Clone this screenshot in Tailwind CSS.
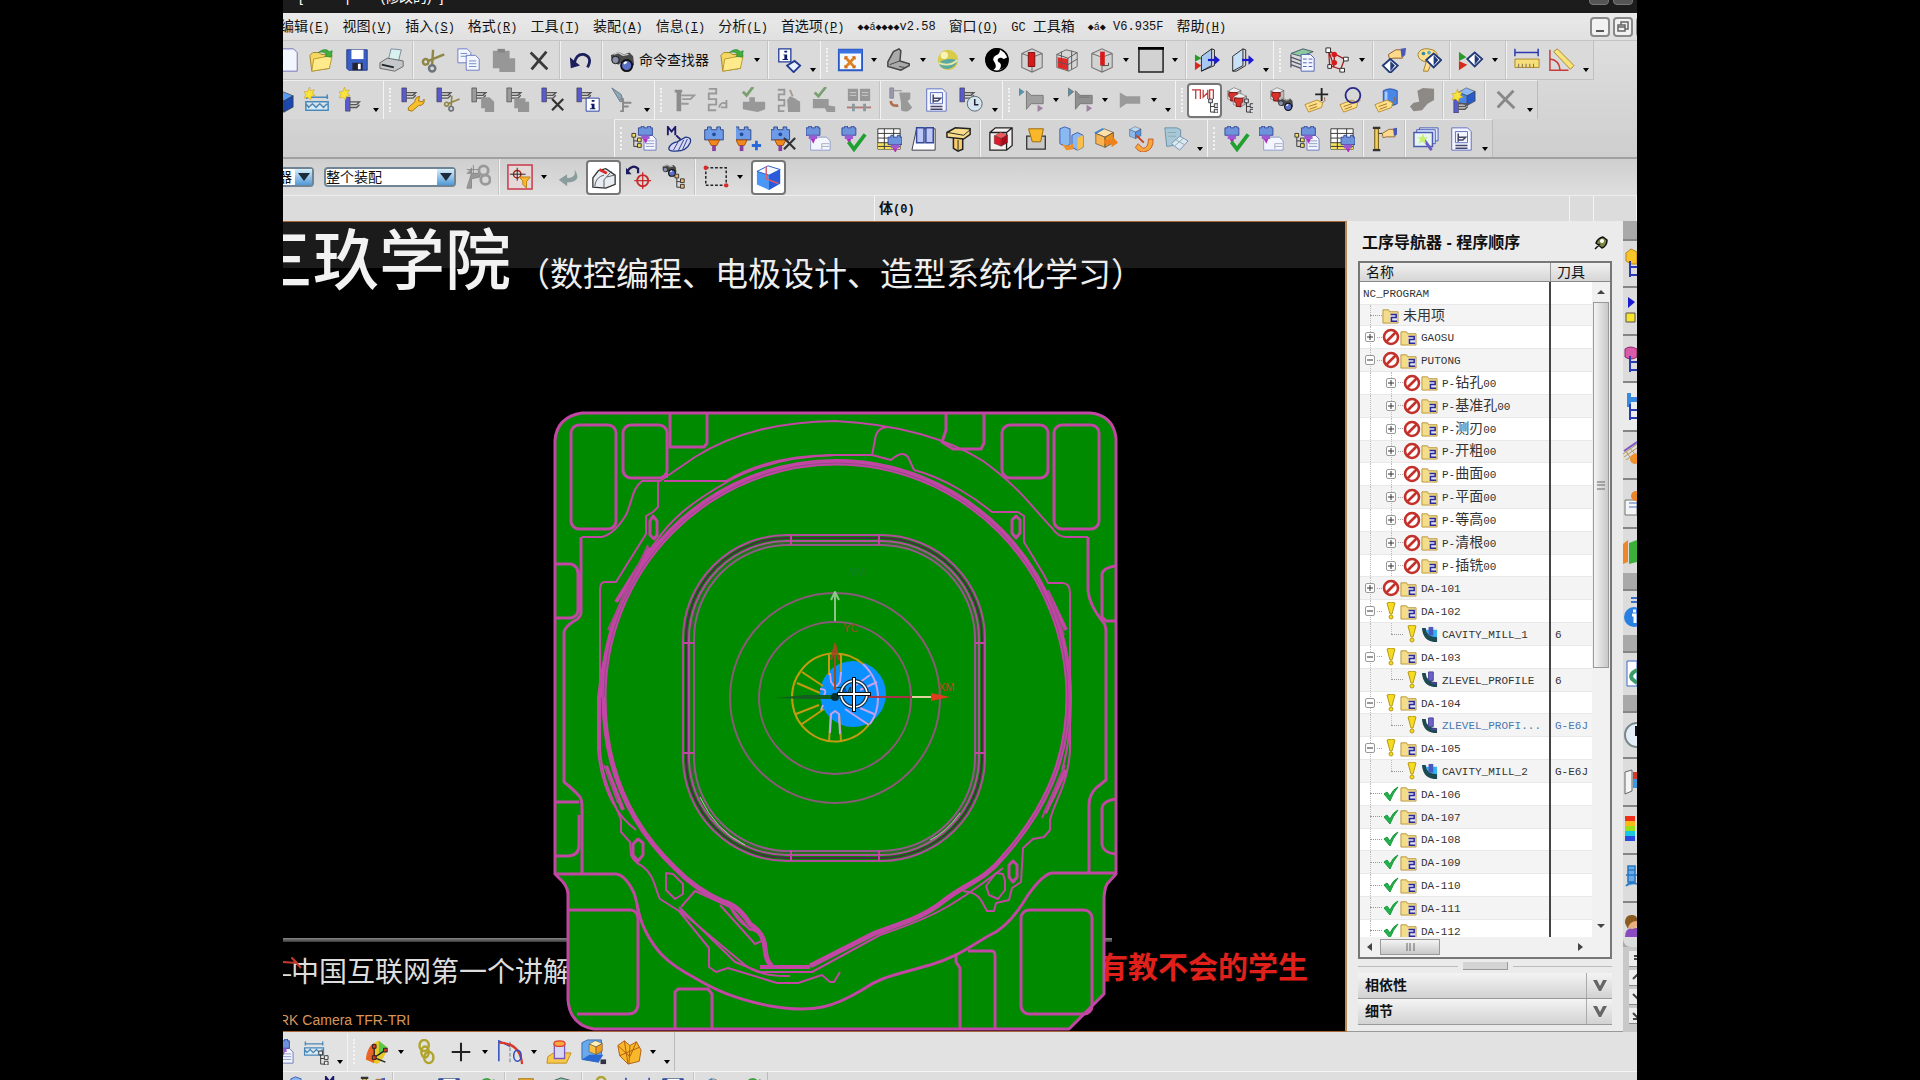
<!DOCTYPE html>
<html lang="zh-CN">

<head>
    <meta charset="UTF-8">
    <meta name="viewport" content="width=device-width, initial-scale=1.0">
    <title>NX 加工</title>
    <script src="https://cdn.jsdelivr.net/npm/@tailwindcss/browser@4"></script>
</head>

<body class="bg-black font-['Liberation_Sans','Noto_Sans_CJK_SC',sans-serif]">
    <div class="flex flex-col h-screen overflow-hidden mx-[283px] bg-[#dcdcdc] text-[#111]">
        <!-- title bar -->
        <header class="flex justify-between h-[13px] shrink-0 overflow-hidden bg-[#1c1c1c] text-white">
            <h1 class="-mt-[13px] ml-4 text-sm leading-5 whitespace-pre">[           |        (修改的)  ]</h1>
            <div class="flex gap-1 -mt-[15px] mr-1">
                <button aria-label="最小化" class="w-5 h-5 rounded-sm border border-[#777] bg-[#555] flex items-end justify-center"><span class="w-2 h-[3px] mb-1 bg-white"></span></button>
                <button aria-label="最大化" class="w-5 h-5 rounded-sm border border-[#777] bg-[#555] flex items-end justify-center"><span class="w-3 h-[3px] mb-1 bg-white"></span></button>
            </div>
        </header>

        <!-- menu bar -->
        <nav class="flex items-center h-7 shrink-0 bg-linear-to-b from-[#eaeaea] to-[#e0e0e0] border-b border-[#c4c4c4]">
            <div id="menu" class="flex flex-1 gap-[13px] -ml-[3px] text-[14px] leading-5 whitespace-nowrap"></div>
            <div class="flex gap-[3px] w-[47px] overflow-hidden shrink-0">
                <button aria-label="最小化文档" class="w-5 h-5 shrink-0 rounded-sm border-2 border-[#8a8a8a] bg-[#f2f2f2] flex items-end justify-center"><span class="w-2 h-[2px] mb-[3px] bg-[#555]"></span></button>
                <button aria-label="还原文档" class="w-5 h-5 shrink-0 rounded-sm border-2 border-[#8a8a8a] bg-[#f2f2f2]"><svg viewBox="0 0 16 16" class="w-4 h-4"><path d="M6 6V3h7v7h-3M3 6h7v6H3zM3 8h7" fill="none" stroke="#666" stroke-width="1.5"/></svg></button>
                <button aria-label="关闭文档" class="w-5 h-5 shrink-0 rounded-sm border-2 border-[#8a8a8a] bg-[#f2f2f2]"></button>
            </div>
        </nav>

        <!-- tool bars -->
        <div class="shrink-0 bg-linear-to-b from-[#dedede] to-[#cecece] border-b-2 border-[#a0a0a0]">
            <div class="flex h-[39px] overflow-hidden"><div id="bar1" class="flex items-center -ml-[14px] shrink-0 bg-[#dadada] border-b border-r border-[#c0c0c0]"></div></div>
            <div class="flex h-[39px] overflow-hidden"><div id="bar2" class="flex items-center -ml-[19px] shrink-0 bg-[#d8d8d8] border-t border-t-[#eee] border-r border-r-[#bbb]"></div></div>
            <div class="flex h-[38px] overflow-hidden"><div id="bar3" class="flex items-center ml-[331px] shrink-0 bg-[#d4d4d4] border-t border-t-[#eee] border-r border-r-[#bbb]"></div></div>
        </div>

        <!-- selection bar -->
        <div class="flex items-center h-9 shrink-0 bg-linear-to-b from-[#cfcfcf] to-[#dedede] overflow-hidden text-[14px]">
            <label class="relative shrink-0 w-[31px] h-5 mr-[10px]">
                <select aria-label="类型过滤器" class="appearance-none absolute right-0 w-[120px] h-5 pr-5 text-right leading-4 bg-white rounded-sm border-2 border-[#6f8596]"><option>无选择过滤器</option></select>
                <span class="absolute right-[2px] top-[2px] w-[17px] h-4 bg-linear-to-b from-[#d8eefb] to-[#4f9ad6] flex items-center justify-center pointer-events-none"><svg viewBox="0 0 12 8" class="w-3 h-2"><path d="M0 0h12L6 8z" fill="#1b2b3a"/></svg></span>
            </label>
            <label class="relative shrink-0 w-[132px] h-5">
                <select aria-label="选择范围" class="appearance-none w-full h-5 leading-4 bg-white rounded-sm border-2 border-[#6f8596]"><option>整个装配</option></select>
                <span class="absolute right-[2px] top-[2px] w-[17px] h-4 bg-linear-to-b from-[#d8eefb] to-[#4f9ad6] flex items-center justify-center pointer-events-none"><svg viewBox="0 0 12 8" class="w-3 h-2"><path d="M0 0h12L6 8z" fill="#1b2b3a"/></svg></span>
            </label>
            <div id="selbar" class="flex items-center h-full ml-1"></div>
        </div>

        <!-- status line -->
        <div class="flex shrink-0 h-[26px] items-stretch bg-[#dcdcdc] border-t border-[#eee] text-[14px] leading-6 font-bold">
            <div class="w-[592px] shrink-0 border-r border-[#f4f4f4]"></div>
            <output class="flex-1 pl-1">体<span class="font-['Liberation_Mono',monospace] text-[12px]">(0)</span></output>
            <div class="w-6 border-l border-[#f4f4f4]"></div>
            <div class="w-11 border-x border-[#f4f4f4]"></div>
        </div>

        <div class="flex flex-1 min-h-0">
            <!-- graphics window -->
            <main class="relative flex-1 min-w-0 overflow-hidden bg-black border-y border-[#a8673a] border-r-2 border-r-[#b98a52]">
                <div class="absolute inset-x-0 top-0 h-[46px] bg-[#1b1b1b]"></div>
                <p class="absolute -left-[36px] -top-[6px] text-[66px] leading-[90px] font-medium text-[#f2f2f2] whitespace-nowrap">三玖学院</p>
                <p class="absolute left-[234px] top-[28px] text-[33px] leading-[50px] text-[#eee] whitespace-nowrap">（数控编程、电极设计、造型系统化学习）</p>
                <div class="absolute left-0 top-[716px] w-[829px] h-1 bg-linear-to-b from-[#888] to-[#3a3a3a]"></div>
                <p class="absolute -left-[20px] top-[731px] text-[28px] leading-10 text-[#ddd] whitespace-nowrap">—中国互联网第一个讲解</p>
                <p class="absolute left-[815px] top-[726px] text-[30px] leading-10 font-bold text-[#e0201a] whitespace-nowrap">有教不会的学生</p>
                <p class="absolute -left-[4px] top-[788px] text-[14px] leading-5 text-[#d8965a] whitespace-nowrap">RK Camera TFR-TRI</p>
                <svg viewBox="283 222 1063 809" preserveAspectRatio="xMinYMin slice" class="absolute inset-0 w-full h-full" fill="none" stroke="#c246a4" stroke-width="2" stroke-linejoin="round">
                    <path d="M283 962l14 1-5-5 9 10" stroke="#c43a2e" stroke-width="2"/>
                    <!-- stock outline -->
                    <path fill="#008a00" stroke-width="3" d="M555 440Q557 417 582 413H1090Q1113 415 1116 438V874L1107 884Q1104 890 1104 900V994L1069 1029H594Q570 1025 568 1000V895Q568 888 563 882L555 874Z"/>
                    <!-- pockets -->
                    <g stroke-width="3">
                        <rect x="571" y="425" width="45" height="104" rx="8"/>
                        <rect x="623" y="425" width="44" height="53" rx="8"/>
                        <path d="M670 413V447H704L707 443V413"/>
                        <rect x="1002" y="425" width="46" height="53" rx="8"/>
                        <rect x="1054" y="425" width="45" height="104" rx="8"/>
                        <path d="M946 413V430L942 442L953 449H981L984 443V413"/>
                        <path d="M556 564H571Q578 566 578 574V610Q578 616 571 618H556M581 537V612Q581 618 574 621Q565 627 564 632V782Q574 790 580 797Q582 800 582 808V873"/>
                        <path d="M556 802H579M579 815V845Q579 856 567 856H556"/>
                        <path d="M1088 537V590Q1089 605 1103 622Q1106 625 1106 632V780L1096 788Q1089 795 1089 805V873"/>
                        <path d="M1115 566Q1103 568 1102 574V617L1106 621H1115M1115 799Q1103 801 1102 808V845Q1104 853 1115 854"/>
                        <path d="M555 874H615Q625 874 634 893Q637 902 639 915M568 910H631Q638 911 638 920V1005Q637 1014 628 1014H577"/>
                        <rect x="1021" y="910" width="71" height="104" rx="8"/>
                        <path d="M1115 873H1052Q1043 874 1028 895C1018 912 1006 928 990 935C972 945 960 956 930 965C895 975 880 977 862 990C835 1006 815 1014 770 1006C735 999 715 990 695 978C665 962 655 950 645 930Q640 920 637 905"/>
                        <path d="M675 1029V992L678 989H708L712 994V1029M956 956V962L960 968V1029M968 951H992Q995 951 995 956V1029"/>
                    </g>
                    <!-- outer arc and side contours -->
                    <path d="M582 537H602Q616 533 627 513C633 497 633 488 642 481H660L695 457C735 432 780 422 835 421C900 424 950 440 983 461C1020 488 1030 505 1052 528Q1058 537 1066 537H1088"/>
                    <path d="M667 478V449M658 480V507L653 512L646 516V534L616 582H604Q600 583 600 590V750C603 785 614 800 621 820V832L630 842L631 855Q634 862 642 866C655 875 655 890 660 899L679 911L709 948V967L716 972L728 968L777 983H798L822 975L830 982H834L840 972"/>
                    <path d="M664 481H726Q770 455 835 455H872L875 440Q876 427 889 427M872 455L891 460Q902 450 908 457L914 470C945 478 975 498 992 512H1018L1024 516V542L1044 575L1048 583H1062Q1070 583 1070 593V750C1068 785 1055 800 1050 820V830L1044 837L1033 839L1023 848L1021 882L1012 888L1009 900L996 903L994 911L987 911L981 900Q976 892 963 891"/>
                    <path d="M835 455Q770 457 727 482C690 503 670 520 655 543C625 580 604 640 598 697V750C602 790 616 815 636 830"/>
                    <!-- main bore -->
                    <path stroke-width="5" d="M1068 697C1068 760 1045 810 1003 857C985 880 965 884 945 900C920 920 895 925 875 933L810 966M772 966Q766 962 765 948Q764 933 750 924Q738 905 724 902Q696 890 675 868C625 820 604 760 604 697A231 233 0 0 1 1068 697"/>
                    <path d="M601 697A234 236 0 0 1 1071 697Q1071 740 1062 770M1003 868Q968 895 945 908T880 935L812 972H760L735 962L679 907"/>
                    <path stroke="#8f4a86" stroke-width="1" d="M604 697A231 233 0 0 1 1068 697C1068 760 1045 810 1003 857"/>
                    <path stroke-width="4" d="M606 766L623 810M1066 770L1045 813M616 602L650 548M1048 592L1066 630"/>
                    <path stroke-width="4" d="M760 967H810"/>
                    <path d="M1042 818L1065 765M618 803L604 765M608 630L648 545M1048 590L1064 635" stroke="#a84a90"/>
                    <!-- small slots -->
                    <path d="M653 516l4 5v14l-3 4-4-4v-14zM1016 516l4 4v13l-4 5-4-5v-13zM638 839l5 4v12l-5 6-5-6v-11zM1013 861l4 4v12l-4 5-4-5v-12z" stroke-width="3"/>
                    <path d="M666 873l7 1 10 10v10l-8 5-9-9zM996 873l7 1 2 7v9l-7 9-9-4-3-9zM681 907L695 891L730 907L750 930Q760 926 764 940L755 944L738 925L720 905"/>
                    <path d="M728 902Q737 925 757 932M679 910L745 965Q760 977 790 976"/>
                    <!-- rounded pocket -->
                    <g>
                        <rect x="683" y="535" width="302" height="326" rx="104" stroke="#b14c9a"/>
                        <rect x="686" y="538" width="296" height="320" rx="101" stroke="#4d2a48" />
                        <rect x="689" y="541" width="290" height="314" rx="98" stroke="#b0509c" stroke-width="2"/>
                        <rect x="691" y="543" width="286" height="310" rx="96" stroke="#4a5a40" stroke-width="1"/>
                        <rect x="694" y="545" width="281" height="306" rx="94" stroke="#96588a"/>
                        <path d="M700 797Q715 830 745 845M960 813Q945 833 930 840" stroke="#a8cfa0" stroke-width="1"/>
                        <path d="M791 534v11M879 534v11M683 643h11M975 643h11M683 753h11M975 753h11M791 850v11M879 850v11"/>
                    </g>
                    <circle cx="835" cy="698" r="105" stroke="#8a5a78"/>
                    <circle cx="835" cy="698" r="76" stroke="#8a5a78"/>
                    <!-- tool and axes -->
                    <circle cx="853" cy="694" r="33" fill="#0a90ff" stroke="none"/>
                    <g stroke="#c49a10">
                        <path d="M863 664A43 44 0 1 0 870 723M802 672l21 14M797 683l23 10M796 714l23-9M802 724l22-15M829 741l2-28M841 741l-2-28M829 655v20M841 655v20"/>
                    </g>
                    <path d="M863 664Q878 678 878 698Q878 713 870 724M830 673l1 9 3 4 3 0 3-4 1-10M830 733l1-19 4-3 4 3 1 20M820 689q8 0 4 6M823 705l-2 5M856 685l14-10M860 690l17-8M845 709l24 16M860 708l14 6" stroke="#c3a2ee"/>
                    <path d="M835 621V593M831 600l4-8 4 8" stroke="#8cc58a"/>
                    <path d="M835 690V646M831 660l4-16 4 16" stroke="#a04a20"/>
                    <path d="M775 698L805 695H835V699H805Z" fill="#155c20" stroke="none"/>
                    <path d="M868 697H912" stroke="#a83448"/>
                    <path d="M912 697H932" stroke="#e0d0a0"/>
                    <path d="M931 693L950 697L931 701Z" fill="#e23a20" stroke="none"/>
                    <circle cx="835" cy="697" r="4" fill="#043030" stroke="none"/>
                    <g stroke="none" font-family="Liberation Sans" font-size="11">
                        <text x="843" y="632" fill="#9c4a20">YC</text>
                        <text x="938" y="691" fill="#b84a18">XM</text>
                        <text x="836" y="695" fill="#033838">ZM</text>
                        <text x="849" y="576" fill="#147a30">YM</text>
                    </g>
                    <circle cx="854" cy="694" r="13" stroke="#12304a" stroke-width="4"/>
                    <circle cx="854" cy="694" r="13" stroke="#fff" stroke-width="1.6"/>
                    <path d="M854 677V712M837 694H871" stroke="#111" stroke-width="4"/>
                    <path d="M854 678V711M838 694H870" stroke="#fff"/>
                </svg>
            </main>

            <!-- operation navigator -->
            <aside class="flex flex-col w-[276px] shrink-0 px-[11px] pb-[6px] bg-[#ebebeb] border-b border-[#999]">
                <div class="flex items-center justify-between h-10 pl-1 pr-1 pt-1 shrink-0">
                    <h2 class="text-[16px] leading-5 font-bold whitespace-nowrap">工序导航器 - 程序顺序</h2>
                    <button aria-label="固定"><svg viewBox="0 0 14 14" class="w-[14px] h-[14px]"><path d="M1 13l5-5M2 7q2-5 7-6l4 3q0 6-5 8z" fill="#7c8446" stroke="#111" stroke-width="1.5"/><circle cx="8" cy="5" r="2" fill="#fff"/></svg></button>
                </div>
                <div class="flex flex-col flex-1 min-h-0 border-2 border-[#777] bg-white">
                    <div class="flex h-[19px] shrink-0 bg-linear-to-b from-[#f0f0f0] to-[#d6d6d6] border-b border-[#888] text-[14px] leading-[18px]">
                        <span class="flex-1 pl-[6px] border-r border-[#999]">名称</span>
                        <span class="w-[59px] pl-[6px]">刀具</span>
                    </div>
                    <div class="flex flex-1 min-h-0">
                        <div class="relative flex-1 min-w-0 overflow-hidden">
                            <table aria-label="程序顺序" class="w-full h-[661px] table-fixed text-[14px] leading-4">
                                <colgroup><col><col class="w-[42px]"></colgroup>
                                <tbody id="tree"></tbody>
                            </table>
                        </div>
                        <div class="flex flex-col items-center w-[18px] bg-[#f1f1f1] text-[#444]">
                            <svg viewBox="0 0 18 20" class="w-[18px] h-5 shrink-0"><path d="M5 12l4-4 4 4z" fill="#444"/></svg>
                            <div class="flex items-center justify-center w-4 h-[366px] border border-[#999] bg-linear-to-r from-[#f4f4f4] to-[#c8c8c8]"><svg viewBox="0 0 8 9" class="w-2 h-[9px]"><path d="M0 1h8M0 4h8M0 8h8" stroke="#666"/></svg></div>
                            <svg viewBox="0 0 18 20" class="w-[18px] h-5 mt-auto shrink-0"><path d="M5 7l4 4 4-4z" fill="#444"/></svg>
                        </div>
                    </div>
                    <div class="flex items-center h-5 shrink-0 pr-5 bg-[#f1f1f1]">
                        <svg viewBox="0 0 20 20" class="w-5 h-5"><path d="M12 6l-5 4 5 4z" fill="#444"/></svg>
                        <div class="flex items-center justify-center w-[60px] h-4 border border-[#999] bg-linear-to-b from-[#f4f4f4] to-[#c8c8c8]"><svg viewBox="0 0 9 8" class="w-[9px] h-2"><path d="M1 0v8M4 0v8M8 0v8" stroke="#666"/></svg></div>
                        <svg viewBox="0 0 20 20" class="w-5 h-5 ml-auto"><path d="M8 6l5 4-5 4z" fill="#444"/></svg>
                    </div>
                </div>
                <div class="flex items-center gap-[5px] h-[14px] shrink-0">
                    <div class="flex-1 h-px bg-[#bbb]"></div>
                    <div class="w-[45px] h-2 bg-[#d4d4d4] border-b border-r border-[#999]"></div>
                    <div class="flex-1 h-px bg-[#bbb]"></div>
                </div>
                <div class="flex flex-col shrink-0 text-[14px] leading-[24px] font-bold">
                    <button class="flex justify-between h-[26px] pl-[7px] text-left border-b border-[#999] bg-linear-to-b from-[#f4f4f4] to-[#d2d2d2]">相依性<span class="flex items-center justify-center w-[26px] h-full border-l border-[#aaa]"><svg viewBox="0 0 14 11" class="w-[14px] h-[11px]"><path d="M0 0h4l3 6 3-6h4L8 11H6z" fill="#666"/></svg></span></button>
                    <button class="flex justify-between h-[26px] pl-[7px] text-left border-b border-[#999] bg-linear-to-b from-[#f4f4f4] to-[#d2d2d2]">细节<span class="flex items-center justify-center w-[26px] h-full border-l border-[#aaa]"><svg viewBox="0 0 14 11" class="w-[14px] h-[11px]"><path d="M0 0h4l3 6 3-6h4L8 11H6z" fill="#666"/></svg></span></button>
                </div>
            </aside>

            <!-- resource bar, cut by the window edge -->
            <div id="tabs" class="flex flex-col w-[14px] shrink-0 overflow-hidden bg-[#a9a9a9] pt-[18px]"></div>
        </div>

        <!-- bottom tool bars -->
        <div class="flex shrink-0 h-[39px] bg-[#e2e2e2] overflow-hidden"><div id="bar4" class="flex items-center -ml-[20px] shrink-0 border-r border-[#bbb]"></div></div>
        <div class="flex shrink-0 h-[9px] bg-[#dedede] overflow-hidden border-t border-[#f4f4f4]"><div id="bar5" class="flex items-center h-[34px] -ml-[34px] shrink-0 border-r border-[#bbb]"></div></div>
    </div>

    <script>
        // shared icon pieces, all on a 28 x 28 grid
        const op = c => `<path d="M2 1h5v15H2z" fill="${c}" stroke="#333" stroke-width=".6"/><path d="M7 6h10l-3 3H7M7 12h7l3-3" fill="none" stroke="#555" stroke-width="1.5"/>`;
        const OP = op('#5a5ad0'), OPG = op('#9a9a9a');
        const cross = (x, y, c) => `<path d="M${x} ${y}l12 12M${x + 12} ${y}l-12 12" stroke="${c}" stroke-width="2.4"/>`;
        const tool = (x, y) => `<g transform="translate(${x} ${y})"><path d="M0 2h3V0h3v2h4V0h3v2h2v8H0z" fill="#6d93dc" stroke="#334a96"/><path d="M3 10h9v4H3z" fill="#9b5bd2"/><path d="M5 14h5l-2 5z" fill="#b22fc0"/></g>`;
        const toolBig = x => `<g transform="translate(${x} 1)"><path d="M0 3h3V0h4v3h6V0h4v3h3v11H0z" fill="#6d9be8" stroke="#2c4788"/><circle cx="10" cy="8" r="2" fill="#234a9a"/><path d="M4 14h12l-3 6H7z" fill="#f08a1c" stroke="#a04a10"/><path d="M8 20h4v6H8z" fill="#8a40a0"/></g>`;
        const scissors = (x, y, s) => `<g transform="translate(${x} ${y}) scale(${s})" fill="none" stroke="#8f8648" stroke-width="2.6"><path d="M13 2L12 18M25 7L8 14"/><circle cx="5" cy="15" r="3"/><circle cx="12" cy="22" r="3.4" stroke="#6d747c"/></g>`;
        const tag = `<path d="M1 19l13-5 6 3-1 5-14 5z" fill="#ffe08a" stroke="#b88a30"/><path d="M5 21l9-3M6 24l8-3" stroke="#a07020"/><path d="M20 17q4-2 2-6" fill="none" stroke="#a05a30"/>`;
        const tree = (x, y, c) => `<g transform="translate(${x} ${y})" fill="${c}" stroke="#333"><path d="M2 2v12h5M2 8h5" fill="none"/><path d="M0 0h4v4H0zM6 5h4v4H6zM6 11h4v4H6z"/></g>`;
        const bino = (x, y, s) => `<g transform="translate(${x} ${y}) scale(${s})"><path d="M1 5l8-4 6 3 6-2 4 4 1 9-6 6-8-8-3 2-7-4z" fill="#4a4a4a"/><path d="M4 4l5-2 5 3 6-1" fill="none" stroke="#ccc" stroke-width="1.4"/><circle cx="6" cy="10" r="4" fill="#8a90a8" stroke="#111"/><circle cx="18" cy="16" r="6" fill="#5a70c8" stroke="#111" stroke-width="2"/><path d="M15 14l3-2" stroke="#fff" stroke-width="2"/></g>`;
        const cube = (x, y, s, a, b, c) => `<g transform="translate(${x} ${y}) scale(${s})" stroke="#333" stroke-width=".6"><path d="M1 6l9-5 10 4-9 5z" fill="${a}"/><path d="M1 6l10 4v11L1 17z" fill="${b}"/><path d="M11 10l9-5v11l-9 5z" fill="${c}"/></g>`;
        const redCube = (x, y) => cube(x, y, .75, '#eee', '#ddd', '#bbb') + `<path d="M${x + 2} ${y + 6}h9v4l-2 2v3h-5v-3l-2-2z" fill="#d8332c" stroke="#7a1010"/>`;
        const cage = `<path d="M3 7l11-5 11 5v15l-11 5-11-5zM3 7l11 4 11-4M14 11v16" fill="#d2d2d2" stroke="#777" stroke-width="1.2"/>`;
        const folder = `<path d="M1 9l3-3h7l2 2h9v15L3 26z" fill="#f4d765" stroke="#a38120"/><path d="M5 13l20-4-3 14L3 26z" fill="#ffeb8c" stroke="#b8962c"/><path d="M10 6q7-6 12-1l3-1-1 7-7-1 2-2q-3-4-9-2" fill="#3fae3c" stroke="#1d7a24" stroke-width=".6"/>`;
        const page = (x, y, w, h, c) => `<path d="M${x} ${y}h${w - 4}l4 4v${h - 4}h-${w}z" fill="#f4f6ff" stroke="${c}"/>`;
        const diamond = (x, y) => `<path d="M${x} ${y + 7}l8-7 8 7-8 8z" fill="#fff" stroke="#223a7a" stroke-width="2"/><path d="M${x + 8} ${y + 2}l5 5-5 6z" fill="#223a7a"/>`;
        const hand = (x, y) => `<path d="M${x} ${y + 6}l8-5h5l4 4-2 5H${x + 5}l-4 1z" fill="#ffd98c" stroke="#8a5a20"/><path d="M${x + 13} ${y}l6-1-1 8-4 2z" fill="#4a58b8"/>`;
        const grid = `<path d="M2 3h24v22H2z" fill="#fff" stroke="#333"/><path d="M2 18h24v7H2z" fill="#f5e060"/><path d="M2 8h24M2 13h24M2 18h24M2 22h24M9 3v22M19 3v22" stroke="#333"/>`;
        const funnel = c => `<path d="M8 4l5 5h13v9H13l-5 6z" fill="${c}" stroke="#777"/>`;
        const wave = `<path d="M2 11h24M2 16h24v9H2zM3 8v5M25 8v5M2 18l3 4 4-4 4 4 4-4 4 4 4-4" fill="#d8ecf8" stroke="#4a88b8" stroke-width="1.6"/>`;
        const star = `<path d="M6 0l1 4 4-1-2 4 3 2-4 1-1 4-3-3-4 1 2-4-2-3 4 0z" fill="#f8e43a" stroke="#c8a020" stroke-width=".6"/>`;

        const icons = {
            newDoc: page(4, 2, 21, 24, '#6a6ab8'),
            open: folder,
            save: `<path d="M3 3h22v22H5l-2-2z" fill="#3a5fc4" stroke="#223a80"/><path d="M8 3h13v10H8z" fill="#fff"/><path d="M9 17h11v8H9z" fill="#223"/><path d="M15 18h3v6h-3z" fill="#fff"/>`,
            print: `<path d="M10 14l3-12 11 1-3 12z" fill="#d8f0ee" stroke="#789"/><path d="M1 17l8-5 17 3v6l-9 5-16-3z" fill="#c4c8cc" stroke="#666"/><path d="M3 19l13 3" stroke="#222" stroke-width="2"/>`,
            cut: scissors(0, 1, 1),
            copy: page(2, 2, 14, 15, '#6a78c0') + page(11, 9, 14, 16, '#6a78c0') + `<path d="M5 7h7M5 10h7M14 15h8M14 18h8M14 21h8" stroke="#6a8ac8"/>`,
            paste: `<path d="M2 4h18v8h6v15H9v-4H2z" fill="#979797"/><path d="M7 2h8v4H7z" fill="#858585"/>`,
            del: `<path d="M5 6l18 18M22 5L6 24" stroke="#3a3a3a" stroke-width="3"/>`,
            undo: `<path d="M7 17Q9 7 17 8Q27 11 21 22" fill="none" stroke="#1b1f5c" stroke-width="3"/><path d="M2 11l11 9-10 3z" fill="#1b1f5c"/>`,
            bino: bino(1, 4, 1),
            info: `<path d="M3 2h13v14H3z" fill="#fff" stroke="#223a9a" stroke-width="1.4"/><path d="M9 4h3v2H9zM8 8h4v5h1v1H7v-1h2V9H8z" fill="#111a6a"/><path d="M12 20l8-5 6 5-7 7z" fill="#e8f0ff" stroke="#223a8a" stroke-width="2"/>`,
            fit: `<path d="M2 3h25v22H2z" fill="#f4f8ff" stroke="#2a5ac8" stroke-width="2"/><path d="M2 3h25v4H2z" fill="#3a72e0"/><path d="M9 11l10 11M19 11L9 22" stroke="#e08020" stroke-width="3"/><path d="M8 10h4l-4 4zM20 10v4l-4-4zM8 23v-4l4 4zM20 23h-4l4-4z" fill="#d06a10"/>`,
            laptop: `<path d="M2 16L8 5l6-3 2 2-1 11 10 3v2l-9 5-14-4z" fill="#aaa" stroke="#444" stroke-width="1.6"/><path d="M4 19l11-4M14 21l6 1" stroke="#444"/>`,
            ball: `<circle cx="14" cy="14" r="11" fill="#d8cc4a"/><path d="M4 17q8-6 20-3a11 11 0 0 1-18 7z" fill="#5aa8a0"/><path d="M4 17q12 5 20-3" stroke="#e8e8a8" stroke-width="2" fill="none"/><circle cx="10" cy="9" r="4" fill="#f8f4b8"/>`,
            yin: `<circle cx="14" cy="14" r="12" fill="#fff" stroke="#000" stroke-width="1.6"/><path d="M17 2A12 12 0 0 0 10 25Q15 22 11 16Q8 12 13 9Q18 7 17 2z"/><path d="M15 13q3-3 6 0l5-2q1 6-4 11l-6 3q4-5 1-8-3-1-2-4z"/>`,
            cyl: cage + `<path d="M10 6h7v15h-7z" fill="#d81a1a" stroke="#7a0a0a"/>`,
            wire: `<path d="M3 8l10-5 12 3v15l-9 5-13-4z" fill="#d6d6d6" stroke="#666"/><path d="M4 11l11 2v12l-11-3z" fill="#e02a2a"/><path d="M3 8l12 4 10-6M15 12v14M19 4v20M8 5v18M4 16l11 3 10-6" fill="none" stroke="#555"/>`,
            cylWire: cage + `<path d="M12 5h5v15h-5z" fill="#d81a1a"/><path d="M14 20h7v-3" fill="none" stroke="#444"/>`,
            square: `<path d="M1 1h26v26H1z" fill="#d2d2d2" stroke="#222" stroke-width="1.6"/><path d="M0 0h28v3H0z"/>`,
            door1: `<path d="M1 8l7 4-7 4z" fill="#2a9a2a"/><path d="M1 16l7 4-7 5z" fill="#d82a1a"/><path d="M8 10l11-8v18L8 26z" fill="#a8c8f0" stroke="#222"/><path d="M19 2l3 1v17l-14 6" fill="none" stroke="#222"/><path d="M15 14h10" stroke="#1a1ad0" stroke-width="2.4"/><path d="M22 9l6 5-6 5z" fill="#1a1ad0"/>`,
            door2: `<path d="M4 10l11-8v18L4 26z" fill="#c8e0f8" stroke="#222"/><path d="M15 2l3 1v17l-10 6H4" fill="none" stroke="#222"/><path d="M14 14h10" stroke="#1a1ad0" stroke-width="2.4"/><path d="M21 9l6 5-6 5z" fill="#1a1ad0"/>`,
            layers: `<path d="M1 7l13-5 11 3-13 5z" fill="#8cc8a0" stroke="#456"/><path d="M1 11l11 4M1 15l11 4M1 19l11 4M1 8v14" stroke="#556" stroke-width="1.4"/>` + page(12, 8, 14, 18, '#4a60b0') + `<path d="M14 13h10M14 17h10M14 21h10" stroke="#4a60b0" stroke-dasharray="4 2"/>`,
            sketch: `<path d="M4 4L21 13L17 24L5 20ZM4 4L10 22M10 8l0 8" fill="none" stroke="#a02020" stroke-width="1.4"/><path d="M1 1h5v5H1zM20 11h5v4h-5zM16 23h5v4h-5zM3 19h4v4H3z" fill="#fff" stroke="#222"/><circle cx="10" cy="8" r="3" fill="#d81a1a"/><circle cx="10" cy="17" r="3" fill="#d81a1a"/>`,
            hand: hand(8, 2) + diamond(2, 13),
            palette: `<path d="M2 8q2-7 11-6 10 1 10 8l-6 6-4 10h-5l3-10q-8-1-9-8z" fill="#ffe08c" stroke="#a07a28"/><circle cx="8" cy="7" r="2" fill="#38a"/><circle cx="14" cy="6" r="2" fill="#5ac"/>` + diamond(11, 7),
            diamond: `<path d="M1 5l8 6-8 4z" fill="#2a9a2a"/><path d="M1 15l9 4-9 6z" fill="#d82a1a"/>` + diamond(10, 6),
            ruler: `<path d="M1 6h25M1 2v8M26 2v8" stroke="#2a3ab0" stroke-width="1.6"/><path d="M1 13h26v9H1z" fill="#f6df7a" stroke="#a88428"/><path d="M5 22v-4M9 22v-4M13 22v-4M17 22v-4M21 22v-4" stroke="#765"/>`,
            angle: `<path d="M1 3v22h20M1 13q10 1 11 12" fill="none" stroke="#c83a3a" stroke-width="1.6"/><path d="M5 5l4-3 18 18-4 4z" fill="#f8e27a" stroke="#a88428"/>`,
            blue: cube(4, 4, 1.1, '#5a9cf0', '#2a6ad8', '#1a48b0'),
            waves: wave + star,
            starOp: `<g transform="translate(5 10)">${OP}</g>` + star,
            opWrench: OP + `<path d="M9 22l7-6q0-5 5-6l-1 5 4 1 2-3q1 7-6 7l-7 6-4-1z" fill="#f8c02a" stroke="#a87410"/>`,
            opCut: OP + scissors(9, 8, .7),
            opCopy: OPG + `<path d="M12 11h9l5 5v11H16v-4h-4z" fill="#959595"/>`,
            opPaste: OPG + `<path d="M10 12h12v4h4v11H14v-4h-4z" fill="#959595"/>`,
            opX: OP + cross(13, 13, '#333'),
            opInfo: OP + `<path d="M12 12h14v14H12z" fill="#fff" stroke="#223aa8"/><path d="M18 14h3v2h-3zM17 18h4v5h1v1h-6v-1h2v-4h-1z" fill="#111a6a"/>`,
            opTool: `<path d="M2 1l10 7 2 7-3 1z" fill="#8aa8b8" stroke="#678"/><path d="M11 13h3v13h-3M14 17h9M14 21h6" fill="none" stroke="#888" stroke-width="2"/>`,
            g1: `<path d="M4 3h8v3H4zM6 6h5v20H6z" fill="#8c8c8c"/><path d="M11 9h14l-4 4h-9M11 18h8" stroke="#999" stroke-width="2" fill="none"/>`,
            g2: `<path d="M3 2h8v5H3v6h8v6H3v6h8M14 22q2-7 8-4M22 14v8h-6" fill="none" stroke="#999" stroke-width="2"/>`,
            g3: `<path d="M2 16h7v-5h6v5h11v8l-8 3-16-3z" fill="#989898"/><path d="M2 5l4 4 7-9" fill="none" stroke="#7aa070" stroke-width="3"/>`,
            g4: `<path d="M2 3h7v5H3v6h6v6H3v6h6" fill="none" stroke="#999" stroke-width="2"/><path d="M12 14l3-4 5 2 6 4v11H13z" fill="#989898"/><path d="M15 3l3 7" stroke="#a98" stroke-width="2"/>`,
            g5: `<path d="M2 13h17v7l7 1v6h-9l-2-4H2z" fill="#989898"/><path d="M4 6l4 4 8-10" fill="none" stroke="#7aa070" stroke-width="3"/>`,
            g6: `<path d="M2 2h11v13H2zM15 2h11v13H15z" fill="#979797"/><path d="M4 6h7M4 9h7M17 6h7M17 9h7" stroke="#ccc"/><path d="M1 22h26" stroke="#b07a7a" stroke-width="2"/><path d="M8 18v8M20 18v8" stroke="#899" stroke-width="3"/>`,
            g7: `<path d="M2 1h4v11H2zM6 4h9" fill="#99a" stroke="#889"/><path d="M12 6h12v7l-3 2 5 7q-5 7-12 3v-8z" fill="#999"/><path d="M3 15q0 6 8 5" stroke="#b07050" stroke-width="3" fill="none"/>`,
            rep: page(4, 2, 21, 24, '#5a6ac0') + `<path d="M8 6h13v12H8z" fill="none" stroke="#5a6ac0"/><path d="M11 8v9M11 12h8l-3 3h-5M8 21h13M8 24h13" stroke="#446" stroke-width="1.6" fill="none"/>`,
            clock: OP + `<circle cx="18" cy="18" r="8" fill="#d4e4f0" stroke="#566"/><path d="M18 13v6h4" fill="none" stroke="#223" stroke-width="1.6"/>`,
            fun1: funnel('#a0a0a0') + `<path d="M0 1l6 4-6 5z" fill="#5a90a8"/><path d="M20 19l6 4-6 4z" fill="#a080a0"/>`,
            fun2: funnel('#909090') + `<path d="M11 11h12M0 1l6 4-6 5z" fill="#5a90a8" stroke="#777"/><path d="M20 19l6 4-6 4z" fill="#a080a0"/>`,
            fun3: `<path d="M3 6l7 4h15v8H10l-7 5z" fill="#9a9a9a"/>`,
            opNav: `<path d="M0 3h4v10M4 3h5v10M12 3v8l5-5v7M17 6V3M23 13V3h-4v10" fill="none" stroke="#c03a3a" stroke-width="1.4"/>` + tree(18, 13, '#dde'),
            redTree: redCube(0, 0) + redCube(6, 6) + tree(19, 13, '#dde'),
            redBino: redCube(1, 0) + bino(9, 11, .65),
            tagPlus: tag + `<path d="M19 1v14M12 8h14" stroke="#222" stroke-width="2"/>`,
            tagCircle: tag + `<circle cx="15" cy="9" r="8" fill="none" stroke="#2a2a8a" stroke-width="2"/>`,
            tagCyl: `<path d="M10 4q7-4 15 0v14q-7 4-15 0z" fill="#4a86e8" stroke="#2a50a8"/><path d="M13 5v12" stroke="#a8ccff" stroke-width="3"/>` + tag,
            blob: `<path d="M9 4l6-3 12 1v12l-7 4-6 7-9 1-4-5 4-4 6-1z" fill="#8d8985"/>`,
            starCube: cube(7, 0, .95, '#8ab8f8', '#4a86e8', '#2a5ac8') + `<g transform="translate(1 12)">${OP}</g><g transform="translate(1 2)">${star}</g>`,
            grayX: `<path d="M5 5l18 18M22 4L5 22" stroke="#888" stroke-width="3"/>`,
            treeTool: tree(1, 8, '#f5e060') + page(14, 10, 13, 16, '#6a78b8') + `<path d="M16 16h9M16 19h9M16 22h9" stroke="#8a98c8"/>` + tool(8, 0),
            mill: `<path d="M2 10V1l4 5 4-5v9M11 10l5 5" fill="none" stroke="#1a1a6a" stroke-width="2"/><path d="M3 24q2-6 9-7l9-5q7 0 5 6-4 10-18 9-5 0-5-3z" fill="#d8d8f4" stroke="#223a8a" stroke-width="1.4"/><path d="M8 26l5-9M13 27l6-12M18 25l5-11" stroke="#223a8a"/>`,
            tool: toolBig(4),
            toolPlus: toolBig(-4) + `<path d="M22 16v10M17 21h10" stroke="#2a6ad8" stroke-width="3"/>`,
            toolX: toolBig(0) + cross(14, 13, '#333'),
            toolPage: page(5, 12, 21, 14, '#8a9ac8') + `<path d="M17 19h8M17 22h8M17 19v6" stroke="#aab"/>` + tool(0, 0),
            toolCheck: tool(1, 0) + `<path d="M8 17l6 8L26 9" fill="none" stroke="#1fa030" stroke-width="4"/>`,
            toolTable: grid + tool(13, 10),
            pages: `<path d="M1 26L6 3h20v23z" fill="#fff" stroke="#334"/><path d="M6 2h8v16H6zM16 2h8v16h-8z" fill="#c0c8f8" stroke="#334a9a" stroke-width="1.6"/>`,
            hammer: `<path d="M8 12h10v13l-5 2-5-3z" fill="#f8cc6a" stroke="#222" stroke-width="1.6"/><path d="M1 7l9-5 16 1v6l-7 5-18-2z" fill="#f8dc8a" stroke="#222" stroke-width="1.6"/><path d="M2 7l17 3 7-6M13 15v11" fill="none" stroke="#222"/>`,
            cubeBox: `<path d="M2 7l6-5h18v19l-6 5H2zM2 7h18v19M20 7l6-5" fill="#f4f0f0" stroke="#222" stroke-width="1.4"/>` + cube(6, 6, .75, '#f05a5a', '#e01a2a', '#a80a1a'),
            slot: `<path d="M4 11h20v14H4z" fill="#c8c8c8" stroke="#333" stroke-width="1.4"/><path d="M6 3h16l-3 14h-9z" fill="#f8b82a" stroke="#96680a"/>`,
            boxes: `<path d="M2 3l5-2 6 2v17l-5 2-6-3z" fill="#8ab8f0" stroke="#3a5ab0"/><path d="M15 10l6-3 6 3v13l-6 3-6-3z" fill="#8ab8f0" stroke="#3a5ab0"/><path d="M21 13l6-3v13l-6 3z" fill="#f8c04a"/><path d="M4 19q8 4 12 0l1 6-8 1z" fill="#f0902a"/>`,
            boxArrow: cube(2, 2, 1, '#ffe0a8', '#f8b450', '#e89020') + `<path d="M12 15h9v-4l6 7-7 5v-4h-8z" fill="#f0801a"/><path d="M2 8l9-5" stroke="#3a8ad0" stroke-width="2"/>`,
            boxCurl: cube(1, 0, .65, '#b8d8f8', '#8ab8e8', '#5a90d8') + `<path d="M9 10l8 8" stroke="#c8401a" stroke-width="2"/><path d="M11 19l5 5q6 0 6-10h5q1 12-10 14-6 0-9-5z" fill="#f8a83a" stroke="#c85a2a"/>`,
            calc: `<path d="M2 2h13l4 2v16L4 22z" fill="#a8c8d8" stroke="#6a90a8"/><path d="M9 19l9-8 9 5-9 10z" fill="#dce8f4" stroke="#7a90b0"/><path d="M13 21l9-8M5 7h9M5 11h9M14 15l9 5" stroke="#8aa"/>`,
            post: `<path d="M4 3h4v22H4z" fill="#f4d060" stroke="#7a6420" stroke-width="1.2"/><path d="M2 26h8M2 2h8" stroke="#333" stroke-width="2.4"/><path d="M8 8h6" stroke="#333"/>` + `<g transform="translate(4 0) scale(.9)">${hand(9, 3)}</g>`,
            wins: `<path d="M7 2h20v14H7z" fill="#dde8ff" stroke="#4a5ab0"/><path d="M4 4h20v15H4z" fill="#dde8ff" stroke="#4a5ab0"/><path d="M1 7h20v15H1z" fill="#e8f4f0" stroke="#4a5ab0" stroke-width="1.6"/><path d="M12 15l8 11" stroke="#6a5ac0" stroke-width="3"/><path d="M11 8l1 4h4l-3 3 1 4-4-2-4 2 2-4-3-3h4z" fill="#c8f070"/>`,
            snapGray: `<path d="M2 10h5V4M7 10h9v4l-9 2v10H2z" fill="#999" stroke="#888"/><path d="M2 6h12M9 1v10" stroke="#888"/><circle cx="20" cy="7" r="5" fill="none" stroke="#999" stroke-width="3"/><circle cx="22" cy="17" r="5" fill="none" stroke="#999" stroke-width="3"/>`,
            filter: `<path d="M1 1h26v26H1z" fill="#e4d8d8" stroke="#c83a4a" stroke-width="1.6"/><circle cx="11" cy="11" r="4" fill="none" stroke="#a82a1a" stroke-width="1.6"/><path d="M3 11h17M11 4v14" stroke="#222"/><path d="M13 14l12 0-4 5v7l-4-4v-4z" fill="#f8b82a" stroke="#b87a10"/>`,
            ret: `<path d="M20 6q9 13-8 14v4l-9-7 9-6v4q10 0 8-9z" fill="#8a9c9c"/>`,
            plane: `<path d="M2 15l6-8 8-2 10 7v10l-10 4-14-1z" fill="#e8eef4" stroke="#333" stroke-width="1.4"/><path d="M4 24q1-10 10-12M14 26V17l8-9M17 14l8-2" fill="none" stroke="#555"/><path d="M9 6l8 4" stroke="#d82a2a" stroke-width="3"/>`,
            rotate: `<path d="M2 7q5-7 11-2v5" fill="none" stroke="#1a1a5a" stroke-width="2.4"/><path d="M0 4v7h6z" fill="#1a1a5a"/><circle cx="18" cy="18" r="6" fill="none" stroke="#c82a2a" stroke-width="2"/><path d="M18 9v18M9 18h18" stroke="#c82a2a" stroke-width="1.4"/>`,
            find: bino(1, 0, .6) + tree(15, 11, '#f0b86a'),
            marquee: `<path d="M3 4h22v19H3z" fill="none" stroke="#222" stroke-width="1.6" stroke-dasharray="3 2"/><circle cx="3" cy="4" r="2.4" fill="#d82a2a"/><circle cx="25" cy="23" r="2.4" fill="#d82a2a"/>`,
            solid: `<path d="M1 8l12-6 13 4v15l-12 7-13-6z" fill="#4a98f4"/><path d="M1 8l12-6 13 4-12 6z" fill="#f4f8ff" stroke="#2a5ac0"/><path d="M14 12l12-6v15l-12 7z" fill="#2a5ad8"/><path d="M11 3v13l13 5" fill="none" stroke="#e05a6a" stroke-width="1.6"/>`,
            waveTree: `<g transform="translate(0 -4) scale(.85)">${wave}</g>` + tree(17, 13, '#eee'),
            rainbow: `<path d="M2 22Q4 6 16 2l9 7q-3 14-11 18z" fill="#e8c82a"/><path d="M2 22Q3 9 11 4l0 22z" fill="#e8642a"/><path d="M16 2l10 8-10 8z" fill="#5ac84a"/><path d="M11 8v12l12 5M11 20l12-8" fill="none" stroke="#222" stroke-width="1.4"/><path d="M9 6h4v4H9zM9 18h4v4H9zM21 10h4v4h-4z" fill="#d83a2a" stroke="#222"/>`,
            chain: `<g fill="none" stroke="#b0a42a" stroke-width="2.6"><ellipse cx="12" cy="7" rx="5" ry="6"/><ellipse cx="13" cy="14" rx="4" ry="6"/><ellipse cx="17" cy="20" rx="5" ry="6"/></g>`,
            plus: `<path d="M14 4v20M4 14h20" stroke="#222" stroke-width="2.2"/>`,
            curve: `<path d="M2 24V2l12 6" fill="none" stroke="#2a4ac0" stroke-width="1.6"/><path d="M14 3v22" stroke="#5a7a8a" stroke-dasharray="4 2"/><path d="M2 4q23 0 25 23" fill="none" stroke="#d83a2a" stroke-width="2.4"/><ellipse cx="22" cy="18" rx="4" ry="6" fill="none" stroke="#2a4ac0" stroke-width="1.6"/>`,
            extrude: `<path d="M2 19l6-4h19l-5 11H1z" fill="#f8c84a" stroke="#c08a1a"/><path d="M9 5v16h11V5" fill="#d8d8f4" stroke="#7a5ac0" stroke-width="1.4"/><ellipse cx="14.500" cy="5" rx="6" ry="3" fill="#f8a83a" stroke="#e0402a" stroke-width="1.4"/>`,
            bodies: `<path d="M1 4l6-3h15v16l-3 3v5L1 22z" fill="#6aa8ec" stroke="#3a6ab0"/><path d="M1 22l8-5h15l-5 8z" fill="#2a6ad0"/>` + cube(8, 1, .75, '#fff0b8', '#f8c040', '#f09a20') + `<path d="M21 22h6v5h-6z" fill="#334"/>`,
            mesh: `<path d="M2 7l7-5 6 5 7-4 5 9-2 12-12 3L4 18z" fill="#f8b82a" stroke="#b05a10"/><path d="M2 7l13 12 7-16M9 2l4 25M15 7l-1 20M4 18l21-9" fill="none" stroke="#b05a10"/>`
        };

        const svg = name => `<svg viewBox="0 0 28 28" class="w-[26px] h-[26px]">${icons[name]}</svg>`;
        // tokens: name = button, v = drop-down arrow, o = overflow arrow, | = separator, : = grip
        const parts = {
            'v': `<button aria-label="更多选项" class="flex items-center justify-center w-[14px] h-7 shrink-0"><svg viewBox="0 0 6 4" class="w-[6px] h-1"><path d="M0 0h6L3 4z"/></svg></button>`,
            'o': `<button aria-label="工具条选项" class="flex items-end justify-center w-[14px] h-7 shrink-0 pb-[2px]"><svg viewBox="0 0 6 4" class="w-[6px] h-1"><path d="M0 0h6L3 4z"/></svg></button>`,
            '|': `<span class="w-[7px] self-stretch shrink-0 flex justify-center"><span class="w-[2px] bg-[#c4c4c4] border-r border-[#f2f2f2]"></span></span>`,
            ':': `<span class="w-3 self-stretch shrink-0 flex items-center gap-[5px] py-[7px]"><span class="w-px h-[38px] bg-[#f4f4f4]"></span><span class="h-full border-l-2 border-dotted border-[#f4f4f4]"></span></span>`,
            'find+': `<button class="flex items-center w-[110px] shrink-0 pl-1 text-[14px] leading-5 whitespace-nowrap">${svg('bino')}<span class="ml-1">命令查找器</span></button>`,
            'opNav+': `<button aria-label="opNav" class="flex items-center justify-center w-[35px] h-[35px] shrink-0 bg-white border-2 border-[#777] rounded-sm">${svg('opNav')}</button>`,
            'plane+': `<button aria-label="plane" class="flex items-center justify-center w-[35px] h-[35px] shrink-0 bg-white border-2 border-[#777] rounded-sm">${svg('plane')}</button>`,
            'solid+': `<button aria-label="solid" class="flex items-center justify-center w-[35px] h-[35px] ml-1 shrink-0 bg-white border-2 border-[#777] rounded-sm">${svg('solid')}</button>`
        };
        const button = name => `<button aria-label="${name}" class="flex items-center justify-center w-[35px] h-[35px] shrink-0">${svg(name)}</button>`;
        const bars = {
            bar1: 'newDoc open save print | cut copy paste del | undo | find+ open v | info o : fit v laptop v ball v yin cyl wire cylWire v square v | door1 door2 o : layers sketch v | hand palette | diamond v | ruler angle o',
            bar2: 'blue waves starOp o : opWrench opCut opCopy opPaste opX opInfo opTool o : g1 g2 g3 g4 g5 g6 | g7 rep clock o : fun1 v fun2 v fun3 v o : opNav+ redTree | redBino tagPlus tagCircle tagCyl blob | starCube | grayX o',
            bar3: ': treeTool mill tool toolPlus toolX toolPage toolCheck toolTable pages hammer | cubeBox slot boxes boxArrow boxCurl calc o : toolCheck toolPage treeTool toolTable | post | wins rep o',
            selbar: 'snapGray | filter v ret plane+ rotate find | marquee v solid+',
            bar4: 'treeTool waveTree o : rainbow v chain plus v curve v extrude bodies mesh v o',
            bar5: 'ball boxes mill post | undo save open | slot layers | chain ruler save | boxArrow open'
        };
        for (const id in bars) {
            document.getElementById(id).innerHTML = bars[id].split(' ').map(t => parts[t] || button(t)).join('');
        }

        const mono = s => `<span class="font-['Liberation_Mono','DejaVu_Sans_Mono',monospace] text-[12px]">${s}</span>`;
        const latin = s => s.replace(/[\x21-\x7e]+/g, m => `<span class="font-['Liberation_Mono',monospace] text-[11px]">${m}</span>`);
        const menu = ['编辑(E)', '视图(V)', '插入(S)', '格式(R)', '工具(T)', '装配(A)', '信息(I)', '分析(L)', '首选项(P)', '◆◆á◆◆◆◆v2.58', '窗口(O)', 'GC 工具箱', '◆á◆ V6.935F', '帮助(H)'];
        document.getElementById('menu').innerHTML = menu.map(m => {
            const label = m.replace(/[\x20-\x7e]+/g, mono)
                .replace(/[◆á]+/, d => `<span class="font-['Liberation_Mono','DejaVu_Sans_Mono',monospace] text-[10px]">${d}</span>`);
            return `<button>${label.replace(/\(([A-Z])\)/, '(<u>$1</u>)')}</button>`;
        }).join('');

        // [depth, expander, state, icon, name, tool]
        const rows = [[0, '', '', '', 'NC_PROGRAM', ''], [1, '', '', 'f', '未用项', ''], [1, '+', 'no', 'f', 'GAOSU', ''], [1, '-', 'no', 'f', 'PUTONG', '']];
        ['钻孔', '基准孔', '测刃', '开粗', '曲面', '平面', '等高', '清根', '插铣'].forEach(n => rows.push([2, '+', 'no', 'f', `P-${n}00`, '']));
        rows.push([1, '+', 'no', 'f', 'DA-101', ''],
            [1, '-', 'warn', 'f', 'DA-102', ''], [2, '', 'warn', 'c', 'CAVITY_MILL_1', '6'],
            [1, '-', 'warn', 'f', 'DA-103', ''], [2, '', 'warn', 'z', 'ZLEVEL_PROFILE', '6'],
            [1, '-', 'warn', 'f', 'DA-104', ''], [2, '', 'warn', 'z', 'ZLEVEL_PROFI...', 'G-E6J'],
            [1, '-', 'warn', 'f', 'DA-105', ''], [2, '', 'warn', 'c', 'CAVITY_MILL_2', 'G-E6J']);
        for (let i = 106; i <= 112; i++) rows.push([1, '', 'ok', 'f', 'DA-' + i, '']);

        const states = {
            no: '<circle cx="9" cy="9" r="7" fill="#fff" stroke="#c4302a" stroke-width="2.6"/><path d="M4 14L14 4" stroke="#c4302a" stroke-width="2.6"/>',
            warn: '<path d="M5 1q4-2 8 0l-3 11H8z" fill="#f6dc20" stroke="#b89a18"/><circle cx="9" cy="15" r="2" fill="#f6dc20" stroke="#b89a18"/>',
            ok: '<path d="M2 9l3-2 3 4q3-7 8-9-5 6-8 14z" fill="#22b14c" stroke="#1a9a3c"/>'
        };
        const mill = '<path d="M1 2h4q0 9 12 10v5Q2 17 1 2z" fill="#1c4a50"/>';
        const kinds = {
            f: '<path d="M1 3h6l1 2h9v12H1z" fill="#f3dc8a" stroke="#b8963c"/><path d="M9 8h7v8H9z" fill="#e4e4f0"/><path d="M9 8h6v3h-5v4h6" fill="none" stroke="#2a2a9a" stroke-width="1.6"/>',
            c: '<path d="M5 4h12v11h-6q-6-3-6-11z" fill="#35b4f4"/>' + mill + '<path d="M8 1h5v9H8z" fill="#4a58c0"/>',
            z: mill + '<path d="M8 1h5v9H8z" fill="#6a62c8" stroke="#4a429a"/><path d="M11 13h6" stroke="#4a429a" stroke-width="2"/>'
        };
        document.getElementById('tree').innerHTML = rows.map(([d, ex, st, ic, name, tl], i) => {
            const box = ex
                ? `<button aria-label="展开" class="w-[10px] h-[10px] ml-[2px] mr-[2px] shrink-0 border border-[#999] rounded-[2px] bg-white"><svg viewBox="0 0 8 8" class="w-2 h-2"><path d="${ex === '+' ? 'M1 4h6M4 1v6' : 'M1 4h6'}" stroke="#333"/></svg></button><span class="w-[5px] shrink-0 border-t border-dotted border-[#aaa]"></span>`
                : `<span class="w-3 ml-[7px] shrink-0 border-t border-dotted border-[#999]"></span>`;
            const line = (i > 0 ? '<span class="absolute left-[10px] inset-y-0 border-l border-dotted border-[#bbb]"></span>' : '')
                + (d === 2 ? `<span class="absolute left-[31px] ${ex ? 'inset-y-0' : 'top-0 bottom-1/2'} border-l border-dotted border-[#bbb]"></span>` : '');
            const sel = i === 19 ? 'text-[#4a78b0]' : 'text-[#333]';
            return `<tr class="${i % 2 ? 'bg-[#f4f4f4]' : 'bg-white'} border-b border-[#e8e8e8] ${sel}">
                <td class="relative p-0 border-r-2 border-r-[#444]">${line}<div class="relative flex items-center ${d === 2 ? 'pl-6' : 'pl-[3px]'} whitespace-nowrap">
                ${d ? box : ''}${st ? `<svg viewBox="0 0 18 18" class="w-[18px] h-[18px] shrink-0">${states[st]}</svg>` : ''}
                ${ic ? `<svg viewBox="0 0 18 18" class="w-[17px] h-[17px] mr-1 shrink-0">${kinds[ic]}</svg>` : ''}<span>${latin(name)}</span></div></td>
                <td class="p-0 pl-1 overflow-hidden">${latin(tl)}</td></tr>`;
        }).join('');

        // [artwork, classes]
        const leg = '<path d="M7 20v16M7 26h7M7 34h7" stroke="#2a3ab0" stroke-width="2" fill="none"/>';
        const tabs = [
            ['<path d="M3 12l5-4 6 3v12H8l-5-3z" fill="#f8c42a" stroke="#b8861a"/>' + leg, 'h-[47px] bg-[#dcdcdc]'],
            ['<path d="M5 9l7 5-7 6z" fill="#1a1ad0"/><path d="M3 25h9v9H3z" fill="#f8e42a" stroke="#555"/>', 'h-[48px] bg-[#dcdcdc]'],
            ['<path d="M2 13q5-4 12 0v8q-6 4-12 0z" fill="#d85aa8" stroke="#8a2a6a"/>' + leg, 'h-[47px] bg-[#dcdcdc]'],
            ['<path d="M4 9h4v14H4zM8 13h6v5H8z" fill="#3a8ae0"/>' + leg, 'h-[49px] bg-[#ebebeb]'],
            ['<path d="M0 22l14-10M1 25l13-9M3 28l11-7M2 18l10 14M7 16l7 9" stroke="#b89a58"/><path d="M1 19l13-9" stroke="#7a5ac8" stroke-width="2"/><circle cx="12" cy="27" r="5" fill="#f0902a"/>', 'h-[48px] bg-[#dcdcdc]'],
            ['<path d="M2 19h12v15H2z" fill="#f4f4f4" stroke="#777"/><path d="M6 22h8M6 26h8" stroke="#4a70c0"/><circle cx="13" cy="15" r="5" fill="#e8862a"/>', 'h-[49px] bg-[#dcdcdc]'],
            ['<path d="M0 15l5-4v22l-5 2z" fill="#f0862a"/><path d="M6 14l8-3v22l-8 2z" fill="#3ab03a"/>', 'h-[46px] bg-[#dcdcdc]'],
            ['<circle cx="11" cy="26" r="10" fill="#2a80e0"/><path d="M10 20h3M9 24h3v8" stroke="#fff" stroke-width="3" fill="none"/><path d="M8 7h6M8 11h6" stroke="#3a70c8" stroke-width="2"/>', 'h-[46px] mt-4 bg-[#dcdcdc]'],
            ['<path d="M4 8h10v25H4z" fill="#fff" stroke="#3a6ac8"/><path d="M14 17q-8 4-5 9l5 4" fill="none" stroke="#3a9a6a" stroke-width="4"/>', 'h-[44px] mt-4 bg-[#dcdcdc]'],
            ['<circle cx="14" cy="22" r="12" fill="#e4eef8" stroke="#788" stroke-width="2"/><path d="M13 13v10" stroke="#111" stroke-width="2"/>', 'h-[46px] mt-4 bg-[#dcdcdc]'],
            ['<path d="M2 13l7-2v21l-7 3z" fill="#f4f4f4" stroke="#666"/><path d="M10 13h4v7h-4z" fill="#d83a2a"/><path d="M10 20h4v9h-4z" fill="#3a9ae0"/>', 'h-[48px] bg-[#dcdcdc]'],
            ['<path d="M2 9h10v5H2z" fill="#f0301a"/><path d="M2 14h10v5H2z" fill="#f8b81a"/><path d="M2 19h10v5H2z" fill="#9ae01a"/><path d="M2 24h10v5H2z" fill="#1ac8e0"/><path d="M2 29h10v5H2z" fill="#2a4ae0"/>', 'h-[48px] bg-[#dcdcdc]'],
            ['<path d="M5 11h7v16H5zM3 20h11M3 31q4-5 11-2M5 15h7" fill="#6aace8" stroke="#2a78c0" stroke-width="1.6"/>', 'h-[48px] bg-[#dcdcdc]'],
            ['<path d="M2 34q0-10 9-9h3v9z" fill="#8a4ac0"/><circle cx="9" cy="20" r="6" fill="#e8b080"/><path d="M2 20q0-9 8-8 5 1 4 6-8 0-9 8z" fill="#8a5a20"/>', 'h-[46px] bg-[#dcdcdc] rounded-bl-lg']
        ];
        const small = ['M5 5h6M5 8h6', 'M4 9l4-4 4 4', 'M4 5l4 4 4-4', 'M4 5l4 4 4-4M4 11h8'];
        document.getElementById('tabs').innerHTML = tabs.map(([art, cls], i) =>
            `<button aria-label="资源 ${i + 1}" class="w-[14px] shrink-0 overflow-hidden border-t-2 border-[#858585] ${cls}"><svg viewBox="0 0 14 46" class="w-[14px] h-[46px]">${art}</svg></button>`).join('')
            + `<div class="flex flex-col flex-1 gap-[3px] pt-1 pl-[6px] bg-[#c8c8c8]">` + small.map((p, i) =>
            `<button aria-label="滚动 ${i + 1}" class="w-4 h-4 shrink-0 bg-[#ececec] border-b border-[#888]"><svg viewBox="0 0 16 16" class="w-4 h-4"><path d="${p}" fill="none" stroke="#444" stroke-width="2"/></svg></button>`).join('') + '</div>';
    </script>
</body>

</html>
